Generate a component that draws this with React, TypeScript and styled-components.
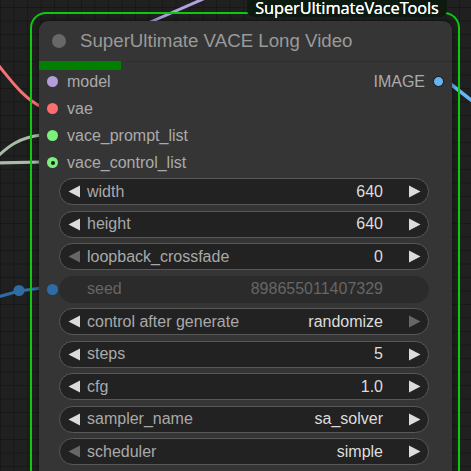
import * as React from "react"
import styled, { createGlobalStyle } from "styled-components"

const GlobalStyle = createGlobalStyle`
  html, body {
    margin: 0;
    padding: 0;
    background: #1f1f1f;
    overflow: hidden;
  }
`

const Canvas = styled.div`
  position: relative;
  width: 471px;
  height: 471px;
  overflow: hidden;
  background-color: #202020;
  background-image:
    linear-gradient(to right, #181818 1px, transparent 1px),
    linear-gradient(to bottom, #181818 1px, transparent 1px);
  background-size: 13.5px 13.5px;
  background-position: 0 7px;
  font-family: "Liberation Sans", Arial, sans-serif;
`

const Wires = styled.svg`
  position: absolute;
  left: 0;
  top: 0;
  width: 471px;
  height: 471px;
`

const NodeFrame = styled.div`
  position: absolute;
  left: 30px;
  top: 12px;
  width: 413px;
  padding: 7px 6px 0 7px;
  border: 2px solid #10c810;
  border-bottom: none;
  border-radius: 16px 16px 0 0;
  height: 500px;
`

const SourceBadge = styled.div`
  position: absolute;
  left: 215px;
  top: -20px;
  width: 200px;
  height: 23px;
  padding-top: 6px;
  box-sizing: border-box;
  background: #0c1a10;
  border-radius: 0 0 7px 7px;
  color: #ffffff;
  font-family: "Noto Sans", "Open Sans", sans-serif;
  font-size: 16.3px;
  line-height: 16px;
  text-align: center;
  letter-spacing: -0.1px;
  text-shadow: 0 0 0.4px #fff;
`

const Node = styled.div`
  position: relative;
  background: #353535;
  border-radius: 9px 9px 0 0;
  height: 470px;
  box-shadow: 0 0 6px rgba(0, 0, 0, 0.5);
`

const TitleBar = styled.div`
  position: relative;
  height: 41px;
  display: flex;
  align-items: center;
  gap: 14px;
  padding-left: 13px;
  border-bottom: 1px solid #2e2e2e;
  box-sizing: border-box;
`

const TitleDot = styled.span`
  width: 14px;
  height: 14px;
  border-radius: 50%;
  background: #686868;
`

const Title = styled.span`
  color: #9a9a9a;
  font-size: 18.7px;
`

const Progress = styled.div`
  position: absolute;
  left: 0;
  top: 40px;
  width: 82px;
  height: 9px;
  background: #008000;
`

const Slots = styled.div`
  display: grid;
  grid-template-columns: 1fr auto;
  grid-auto-rows: 27px;
  padding-top: 6px;
`

const Slot = styled.div<{ $out?: boolean }>`
  display: flex;
  align-items: center;
  gap: ${p => (p.$out ? 8 : 9)}px;
  justify-content: ${p => (p.$out ? "flex-end" : "flex-start")};
  padding: ${p => (p.$out ? "0 8px 0 0" : "0 0 0 8px")};
  color: #ababab;
  font-size: 16px;
  grid-column: ${p => (p.$out ? 2 : 1)};
`

const Dot = styled.span<{ $color: string; $ring?: boolean; $edge?: boolean }>`
  flex: none;
  width: 11px;
  height: 11px;
  border-radius: 50%;
  box-sizing: border-box;
  background: ${p => p.$color};
  border: ${p => (p.$edge ? "1.5px solid #151515" : "none")};
  display: flex;
  align-items: center;
  justify-content: center;
  &::after {
    content: "";
    display: ${p => (p.$ring ? "block" : "none")};
    width: 4px;
    height: 4px;
    border-radius: 50%;
    background: #1d1d1d;
  }
`

const Widgets = styled.div`
  display: flex;
  flex-direction: column;
  gap: 5.5px;
  padding-top: 2px;
`

const WidgetRow = styled.div`
  display: flex;
  align-items: center;
  height: 27px;
`

const Gutter = styled.div`
  width: 20px;
  display: flex;
  align-items: center;
  padding-left: 7.5px;
  box-sizing: border-box;
`

const Widget = styled.div<{ $disabled?: boolean }>`
  width: 370px;
  height: 27px;
  box-sizing: border-box;
  border-radius: 14px;
  border: 1.5px solid ${p => (p.$disabled ? "#2b2b2b" : "#585858")};
  background: ${p => (p.$disabled ? "#2b2b2b" : "#222222")};
  display: flex;
  align-items: center;
  padding: 0 7px 0 8px;
  font-size: 16px;
`

const Label = styled.span<{ $disabled?: boolean }>`
  flex: 1;
  color: ${p => (p.$disabled ? "#666" : "#a9a9a9")};
  margin-left: 6px;
  white-space: nowrap;
`

const Value = styled.span<{ $disabled?: boolean }>`
  color: ${p => (p.$disabled ? "#666" : "#dddddd")};
  margin-right: 25px;
`

const ArrowSlot = styled.span`
  width: 13px;
  height: 13px;
  display: flex;
`

const Arrow = ({ dir, dim }: { dir: "left" | "right"; dim?: boolean }) => (
  <ArrowSlot>
    <svg width="13" height="13" viewBox="0 0 13 13">
      <polygon
        points={dir === "left" ? "12,0.5 12,12.5 0.5,6.5" : "1,0.5 1,12.5 12.5,6.5"}
        fill={dim ? "#666" : "#dcdcdc"}
      />
    </svg>
  </ArrowSlot>
)

const Spacer = styled.span`
  width: 13px;
`

type WidgetData = {
  label: string
  value: string
  dimLeft?: boolean
  dimRight?: boolean
  disabled?: boolean
  linked?: boolean
}

// the last row only peeks in at the bottom edge, so it carries no text
const widgets: WidgetData[] = [
  { label: "width", value: "640" },
  { label: "height", value: "640" },
  { label: "loopback_crossfade", value: "0", dimLeft: true },
  { label: "seed", value: "898655011407329", disabled: true, linked: true },
  { label: "control after generate", value: "randomize", dimRight: true },
  { label: "steps", value: "5" },
  { label: "cfg", value: "1.0" },
  { label: "sampler_name", value: "sa_solver" },
  { label: "scheduler", value: "simple", dimLeft: true },
  { label: "", value: "" },
]

const inputs = [
  { name: "model", color: "#b39ddb" },
  { name: "vae", color: "#ff6e6e" },
  { name: "vace_prompt_list", color: "#7cf07c" },
  { name: "vace_control_list", color: "#7cf07c", ring: true },
]

export default function App() {
  return (
    <Canvas>
      <GlobalStyle />
      <Wires viewBox="0 0 471 471">
        <path d="M 146 24 L 210 -4" stroke="#b3a1e0" strokeWidth="3" fill="none" />
        <path d="M -6 60 C 8 76, 22 98, 42 107" stroke="#f47272" strokeWidth="3" fill="none" />
        <path d="M -6 160 C 8 146, 20 137, 42 135" stroke="#a9bca9" strokeWidth="3" fill="none" />
        <path d="M -6 163 L 42 162" stroke="#a9bca9" strokeWidth="3" fill="none" />
        <path d="M -6 298 L 19 291 L 42 288" stroke="#2f6ca6" strokeWidth="3" fill="none" />
        <circle cx="19" cy="290.5" r="5.5" fill="#2f6ca6" />
        <path d="M 448 82 L 476 104" stroke="#64b5f6" strokeWidth="3.5" fill="none" />
      </Wires>
      <NodeFrame>
        <SourceBadge>SuperUltimateVaceTools</SourceBadge>
        <Node>
          <TitleBar>
            <TitleDot />
            <Title>SuperUltimate VACE Long Video</Title>
            <Progress />
          </TitleBar>
          <Slots>
            {inputs.map(i => (
              <Slot key={i.name}>
                <Dot $color={i.color} $ring={i.ring} />
                {i.name}
              </Slot>
            ))}
            <Slot $out style={{ gridRow: 1 }}>
              IMAGE
              <Dot $color="#64b5f6" $edge />
            </Slot>
          </Slots>
          <Widgets>
            {widgets.map((w, i) => (
              <WidgetRow key={i}>
                <Gutter>{w.linked && <Dot $color="#2f6ca6" />}</Gutter>
                <Widget $disabled={w.disabled}>
                  {w.disabled ? <Spacer /> : <Arrow dir="left" dim={w.dimLeft} />}
                  <Label $disabled={w.disabled}>{w.label}</Label>
                  <Value $disabled={w.disabled}>{w.value}</Value>
                  {w.disabled ? <Spacer /> : <Arrow dir="right" dim={w.dimRight} />}
                </Widget>
              </WidgetRow>
            ))}
          </Widgets>
        </Node>
      </NodeFrame>
    </Canvas>
  )
}
